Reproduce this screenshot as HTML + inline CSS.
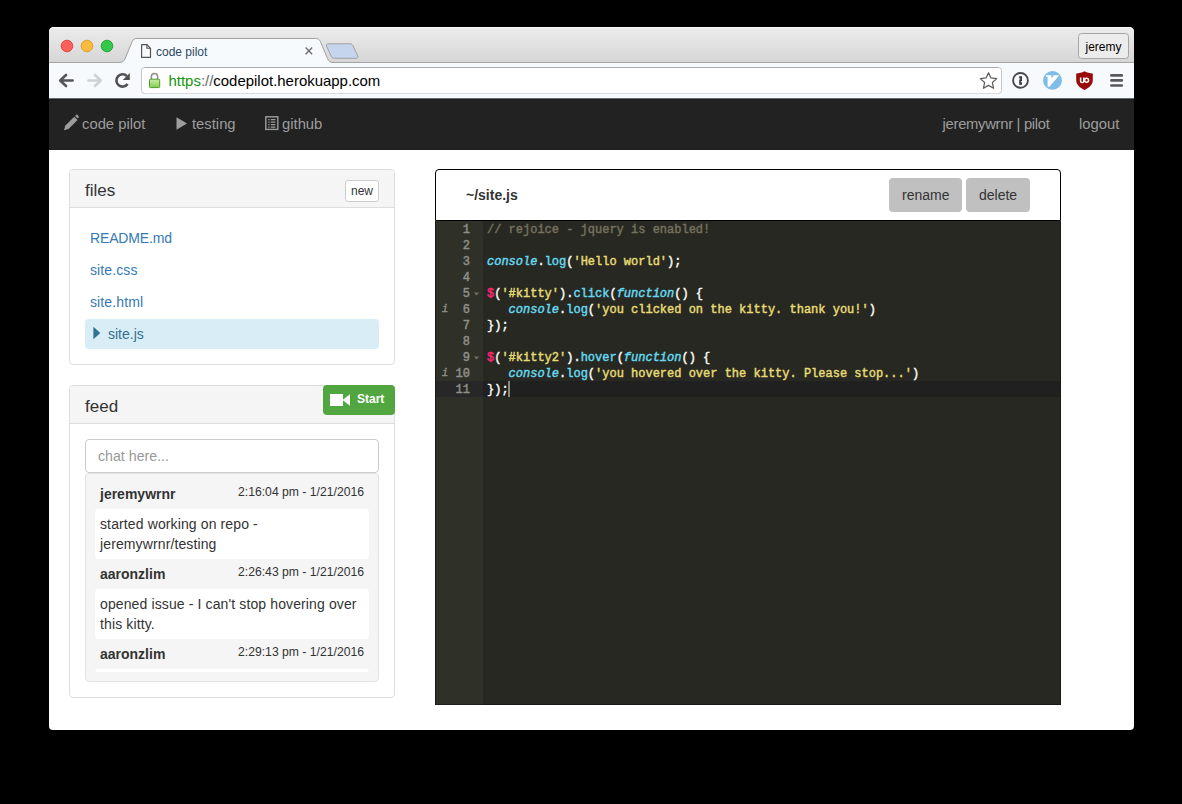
<!DOCTYPE html>
<html><head><meta charset="utf-8">
<style>
*{box-sizing:border-box;margin:0;padding:0}
html,body{width:1182px;height:804px;background:#000;overflow:hidden;font-family:"Liberation Sans",sans-serif;position:relative}
.a{position:absolute;white-space:pre;line-height:1}
#win{position:absolute;left:49px;top:27px;width:1085px;height:703px;background:#fff;border-radius:5px 5px 4px 4px;overflow:hidden}
#title{position:absolute;left:49px;top:27px;width:1085px;height:36px;background:linear-gradient(#ececec,#d6d6d6);border-bottom:1px solid #a3a3a3;border-radius:5px 5px 0 0;box-shadow:inset 0 1px #fafafa}
#toolbar{position:absolute;left:49px;top:63px;width:1085px;height:35px;background:#f6fafd}
#navbar{position:absolute;left:49px;top:98px;width:1085px;height:52px;background:#222;border-top:1px solid #6a6a6a;box-shadow:inset 0 1px #1c1c1c}
.nav{color:#9d9d9d;font-size:14.8px}
.panel{position:absolute;border:1px solid #ddd;border-radius:4px;background:#fff;overflow:hidden}
.ph{position:absolute;left:0;top:0;right:0;background:#f5f5f5;border-bottom:1px solid #ddd}
.link{color:#337ab7;font-size:14px}
.code{font-family:"Liberation Mono",monospace;font-size:12px;line-height:16px;white-space:pre;color:#f8f8f2;-webkit-text-stroke:0.45px currentColor}
.gn{color:#8f908a}
.c{color:#75715e}
.ci{color:#66d9ef;font-style:italic}
.c1{color:#66d9ef}
.s{color:#e6db74}
.k{color:#f92672}
.w{color:#f8f8f2}
.msg{position:absolute;left:95px;width:274px;background:#fff;border-radius:4px}
.user{font-size:14px;font-weight:bold;color:#333}
.ts{font-size:12px;color:#333}
.mt{font-size:14px;color:#333;line-height:20px;letter-spacing:0.12px}
</style></head><body>
<div id="win"></div>
<div id="title"></div>
<div id="toolbar"></div>
<div id="navbar"></div>

<svg class="a" style="left:0;top:0" width="1182" height="100" viewBox="0 0 1182 100">
  <!-- traffic lights -->
  <circle cx="67" cy="46" r="5.8" fill="#fc605c" stroke="#de4841" stroke-width="1"/>
  <circle cx="87" cy="46" r="5.8" fill="#fdbc40" stroke="#dc9f2a" stroke-width="1"/>
  <circle cx="107" cy="46" r="5.8" fill="#34c84a" stroke="#25a532" stroke-width="1"/>
  <!-- active tab -->
  <path d="M118.5,62.5 C121.7,62.5 123.8,61.5 125,58.9 L132.2,41.5 C133.1,39.3 134.6,38.5 137,38.5 L315.5,38.5 C318,38.5 319.4,39.3 320.4,41.5 L327.5,58.5 C328.8,61.5 330.5,62.5 333,62.5 L333,64 L118.5,64 Z" fill="#f6fafd"/>
  <path d="M118.5,62.5 C121.7,62.5 123.8,61.5 125,58.9 L132.2,41.5 C133.1,39.3 134.6,38.5 137,38.5 L315.5,38.5 C318,38.5 319.4,39.3 320.4,41.5 L327.5,58.5 C328.8,61.5 330.5,62.5 333,62.5" fill="none" stroke="#a0a0a0" stroke-width="1"/>
  <!-- new tab -->
  <path d="M328,43.8 L350,43.8 C351.5,43.8 352.3,44.4 352.8,45.4 L357.8,56 C358.3,57.4 357.7,58.3 356.3,58.3 L334.3,58.3 C332.8,58.3 332,57.7 331.5,56.7 L326.5,46.1 C326,44.7 326.6,43.8 328,43.8 Z" fill="#c6d5ee" stroke="#9a9a9a" stroke-width="0.9"/>
  <!-- page icon -->
  <path d="M141.6,44.6 L147,44.6 L150.5,48.3 L150.5,57.4 L141.6,57.4 Z" fill="none" stroke="#555" stroke-width="1.2" stroke-linejoin="round"/>
  <path d="M146.9,44.6 L146.9,48.3 L150.5,48.3" fill="none" stroke="#555" stroke-width="1.1"/>
  <!-- tab close -->
  <path d="M305.6,47.6 L312.2,54.2 M312.2,47.6 L305.6,54.2" stroke="#6e6e6e" stroke-width="1.4"/>
  <!-- back / fwd / reload -->
  <path d="M72.6,80.5 L60.5,80.5 M66,75 L60.2,80.5 L66,86" fill="none" stroke="#555" stroke-width="2.6" stroke-linecap="round" stroke-linejoin="round"/>
  <path d="M88.5,80.5 L100.4,80.5 M95,75 L100.7,80.5 L95,86" fill="none" stroke="#cfd2d5" stroke-width="2.6" stroke-linecap="round" stroke-linejoin="round"/>
  <path d="M127.6,84 A6.15,6.15 0 1 1 126.9,76.1" fill="none" stroke="#505050" stroke-width="2.6"/>
  <path d="M129.8,73 L129.8,80 L122.8,80 Z" fill="#505050"/>
  <!-- address bar -->
  <rect x="141.5" y="67.5" width="860" height="26" rx="3" ry="3" fill="#fff" stroke="#c3c7ca" stroke-width="1"/>
  <path d="M144.5,67.5 H998.5" stroke="#a8acb0" stroke-width="1"/>
  <path d="M144.5,93.5 H998.5" stroke="#d8dbde" stroke-width="1"/>
  <!-- lock -->
  <defs><linearGradient id="lg" x1="0" y1="0" x2="0" y2="1"><stop offset="0" stop-color="#c8f0a4"/><stop offset="1" stop-color="#86cc55"/></linearGradient></defs>
  <path d="M151.4,79.5 L151.4,76.6 A3.1,3.1 0 0 1 157.6,76.6 L157.6,79.5" fill="none" stroke="#8c8c8c" stroke-width="1.5"/>
  <rect x="149.5" y="79.2" width="10.2" height="8.4" rx="1" fill="url(#lg)" stroke="#4f9a2c" stroke-width="1"/>
  <!-- star -->
  <path d="M988.50,72.70 L990.91,77.98 L996.68,78.64 L992.40,82.57 L993.55,88.26 L988.50,85.40 L983.45,88.26 L984.60,82.57 L980.32,78.64 L986.09,77.98 Z" fill="#fff" stroke="#5e5e5e" stroke-width="1.25" stroke-linejoin="round"/>
  <!-- 1password -->
  <circle cx="1020.5" cy="80.4" r="7.4" fill="none" stroke="#4a4a4a" stroke-width="1.9"/>
  <rect x="1019.2" y="76.2" width="2.8" height="8.6" fill="#3a3a3a"/>
  <rect x="1019.2" y="78.4" width="1.1" height="1.1" fill="#f6fafd"/>
  <rect x="1020.9" y="81.2" width="1.1" height="1.1" fill="#f6fafd"/>
  <!-- vimium -->
  <circle cx="1052.5" cy="80.4" r="9.4" fill="#7fbde8"/>
  <path d="M1046,75.2 L1051.4,75.2 L1051.4,78.5 L1054,75.2 L1059.3,75.2 L1049.5,86.8 L1047.6,86.8 L1047.6,76.8 L1046,76.8 Z" fill="#fff"/>
  <!-- ublock -->
  <path d="M1084.5,71.2 C1087,72.6 1090,73.2 1092.8,73.4 L1092.8,80 C1092.8,84.5 1089.5,87.8 1084.5,89.9 C1079.5,87.8 1076.2,84.5 1076.2,80 L1076.2,73.4 C1079,73.2 1082,72.6 1084.5,71.2 Z" fill="#990b0b"/>
  <path d="M1080.6,77.5 L1080.6,81 A1.6,1.6 0 0 0 1083.8,81 L1083.8,77.5" fill="none" stroke="#fff" stroke-width="1.5"/>
  <circle cx="1086.6" cy="80.3" r="1.95" fill="none" stroke="#fff" stroke-width="1.5"/>
  <!-- hamburger -->
  <path d="M1111.4,75.4 h10.4 M1111.4,80.45 h10.4 M1111.4,85.5 h10.4" stroke="#585858" stroke-width="2.7" stroke-linecap="round"/>
  <!-- profile btn -->
  <rect x="1078.5" y="33.5" width="50" height="25" rx="3" fill="#ececec" stroke="#a5a5a5" stroke-width="1"/>
</svg>
<div class="a" style="left:156px;top:46px;font-size:12px;color:#2d4a66">code pilot</div>
<div class="a" style="left:168.5px;top:74px;font-size:14.95px;color:#000"><span style="color:#13960a">https</span><span style="color:#666">://</span>codepilot.herokuapp.com</div>
<div class="a" style="left:1085.5px;top:41px;font-size:12px;color:#000">jeremy</div>

<!-- navbar -->
<svg class="a" style="left:0;top:100px" width="400" height="50" viewBox="0 100 400 50">
  <path d="M64,130.2 L65.2,125.8 L74.3,116.8 L77.6,120.1 L68.5,129.1 Z" fill="#9d9d9d"/>
  <path d="M75,116 L76,115 A1,1 0 0 1 77.6,115 L78.6,116.2 A1,1 0 0 1 78.6,117.6 L78,118.4 Z" fill="#9d9d9d"/>
  <path d="M176.5,117.3 L187,123.5 L176.5,129.7 Z" fill="#9d9d9d"/>
  <rect x="265.8" y="116.8" width="12" height="12.6" fill="none" stroke="#9d9d9d" stroke-width="1.4"/>
  <path d="M268.3,119.6 h1.3 M268.3,122.1 h1.3 M268.3,124.6 h1.3 M268.3,127.1 h1.3 M270.8,119.6 h4.6 M270.8,122.1 h4.6 M270.8,124.6 h4.6 M270.8,127.1 h4.6" stroke="#9d9d9d" stroke-width="1.4"/>
</svg>
<div class="a nav" style="left:82px;top:117px">code pilot</div>
<div class="a nav" style="left:192px;top:117px">testing</div>
<div class="a nav" style="left:282px;top:117px">github</div>
<div class="a nav" style="left:942.6px;top:117px;letter-spacing:-0.3px">jeremywrnr | pilot</div>
<div class="a nav" style="left:1079px;top:117px">logout</div>

<!-- files panel -->
<div class="panel" style="left:69px;top:169px;width:326px;height:196px">
  <div class="ph" style="height:38px"></div>
</div>
<div class="a" style="left:85px;top:182px;font-size:17px;color:#333">files</div>
<div class="a" style="left:344.5px;top:180px;width:34.5px;height:22px;border:1px solid #ccc;border-radius:3px;background:#fff"></div>
<div class="a" style="left:351px;top:185px;font-size:12px;color:#333">new</div>
<div class="a link" style="left:90px;top:231px;letter-spacing:-0.15px">README.md</div>
<div class="a link" style="left:90px;top:263px;letter-spacing:0.1px">site.css</div>
<div class="a link" style="left:90px;top:295px;letter-spacing:0.12px">site.html</div>
<div class="a" style="left:85px;top:319px;width:294px;height:30px;background:#d9edf7;border-radius:4px"></div>
<svg class="a" style="left:93px;top:326px" width="8" height="14"><path d="M0.4,0.8 L7.3,7.05 L0.4,13.3 Z" fill="#31708f"/></svg>
<div class="a link" style="left:108px;top:327px;color:#31708f">site.js</div>

<!-- feed panel -->
<div class="panel" style="left:69px;top:385px;width:326px;height:313px">
  <div class="ph" style="height:38px"></div>
</div>
<div class="a" style="left:85px;top:398px;font-size:17px;color:#333">feed</div>
<div class="a" style="left:323px;top:385px;width:72px;height:30px;background:#52a640;border-radius:4px"></div>
<svg class="a" style="left:330px;top:393px" width="21" height="14"><rect x="0" y="1" width="13" height="12" fill="#fff"/><path d="M12.5,7 L20,1.2 L20,12.8 Z" fill="#fff"/></svg>
<div class="a" style="left:357px;top:393px;font-size:12px;font-weight:bold;color:#fff">Start</div>
<div class="a" style="left:85px;top:439px;width:294px;height:34px;border:1px solid #ccc;border-radius:4px;background:#fff"></div>
<div class="a" style="left:98px;top:449px;font-size:14.2px;color:#999">chat here...</div>
<div class="a" style="left:85px;top:473px;width:294px;height:209px;background:#f5f5f5;border:1px solid #e3e3e3;border-radius:4px;overflow:hidden">
  <div style="position:absolute;left:0;top:0;right:0;height:198px;overflow:hidden">
  <div class="msg" style="left:9px;top:35px;height:50px"></div>
  <div class="msg" style="left:9px;top:115px;height:50px"></div>
  <div class="msg" style="left:9px;top:195px;height:50px"></div>
  </div>
</div>
<div class="a user" style="left:100px;top:487px">jeremywrnr</div>
<div class="a ts" style="left:238px;top:486px;font-size:12.2px">2:16:04 pm - 1/21/2016</div>
<div class="a mt" style="left:100px;top:514px">started working on repo -
jeremywrnr/testing</div>
<div class="a user" style="left:100px;top:567px">aaronzlim</div>
<div class="a ts" style="left:238px;top:566px;font-size:12.2px">2:26:43 pm - 1/21/2016</div>
<div class="a mt" style="left:100px;top:594px">opened issue - I can't stop hovering over
this kitty.</div>
<div class="a user" style="left:100px;top:647px">aaronzlim</div>
<div class="a ts" style="left:238px;top:646px;font-size:12.2px">2:29:13 pm - 1/21/2016</div>

<!-- editor -->
<div class="a" style="left:435px;top:169px;width:626px;height:52px;border:1px solid #000;border-radius:4px 4px 0 0;background:#fff"></div>
<div class="a" style="left:435px;top:221px;width:626px;height:484px;background:#272822">
  <div style="position:absolute;left:1px;top:0;width:47px;bottom:0;background:#2f3129"></div>
  <div style="position:absolute;left:1px;top:160px;width:47px;height:16px;background:#272727"></div>
  <div style="position:absolute;left:48px;top:160px;right:1px;height:16px;background:#202020"></div>
  <div style="position:absolute;left:0;top:0;right:0;bottom:0;border:1px solid rgba(0,0,0,0.35);border-top:0"></div>
</div>
<div class="a" style="left:466px;top:188px;font-size:14px;font-weight:bold;color:#333">~/site.js</div>
<div class="a" style="left:889px;top:178px;width:73px;height:34px;background:#c0c0c0;border-radius:4px"></div>
<div class="a" style="left:966px;top:178px;width:64px;height:34px;background:#c0c0c0;border-radius:4px"></div>
<div class="a" style="left:902px;top:188px;font-size:14px;color:#333">rename</div>
<div class="a" style="left:979px;top:188px;font-size:14px;color:#333">delete</div>
<div class="a code" style="left:487px;top:222px"><span class="c">// rejoice - jquery is enabled!</span></div>
<div class="a code gn" style="left:440px;top:222px;width:30px;text-align:right">1</div>
<div class="a code" style="left:487px;top:238px"></div>
<div class="a code gn" style="left:440px;top:238px;width:30px;text-align:right">2</div>
<div class="a code" style="left:487px;top:254px"><span class="ci">console</span><span class="w">.</span><span class="c1">log</span><span class="w">(</span><span class="s">'Hello world'</span><span class="w">);</span></div>
<div class="a code gn" style="left:440px;top:254px;width:30px;text-align:right">3</div>
<div class="a code" style="left:487px;top:270px"></div>
<div class="a code gn" style="left:440px;top:270px;width:30px;text-align:right">4</div>
<div class="a code" style="left:487px;top:286px"><span class="k">$</span><span class="w">(</span><span class="s">'#kitty'</span><span class="w">).</span><span class="c1">click</span><span class="w">(</span><span class="ci">function</span><span class="w">() {</span></div>
<div class="a code gn" style="left:440px;top:286px;width:30px;text-align:right">5</div>
<div class="a code" style="left:487px;top:302px"><span class="w">   </span><span class="ci">console</span><span class="w">.</span><span class="c1">log</span><span class="w">(</span><span class="s">'you clicked on the kitty. thank you!'</span><span class="w">)</span></div>
<div class="a code gn" style="left:440px;top:302px;width:30px;text-align:right">6</div>
<div class="a code" style="left:487px;top:318px"><span class="w">});</span></div>
<div class="a code gn" style="left:440px;top:318px;width:30px;text-align:right">7</div>
<div class="a code" style="left:487px;top:334px"></div>
<div class="a code gn" style="left:440px;top:334px;width:30px;text-align:right">8</div>
<div class="a code" style="left:487px;top:350px"><span class="k">$</span><span class="w">(</span><span class="s">'#kitty2'</span><span class="w">).</span><span class="c1">hover</span><span class="w">(</span><span class="ci">function</span><span class="w">() {</span></div>
<div class="a code gn" style="left:440px;top:350px;width:30px;text-align:right">9</div>
<div class="a code" style="left:487px;top:366px"><span class="w">   </span><span class="ci">console</span><span class="w">.</span><span class="c1">log</span><span class="w">(</span><span class="s">'you hovered over the kitty. Please stop...'</span><span class="w">)</span></div>
<div class="a code gn" style="left:440px;top:366px;width:30px;text-align:right">10</div>
<div class="a code" style="left:487px;top:382px"><span class="w">});</span></div>
<div class="a code gn" style="left:440px;top:382px;width:30px;text-align:right">11</div>
<svg class="a" style="left:436px;top:221px" width="50" height="180">
  <path d="M38,71.5 L43,71.5 L40.5,74.5 Z" fill="#75715e"/>
  <path d="M38,135.5 L43,135.5 L40.5,138.5 Z" fill="#75715e"/>
</svg>
<div class="a code" style="left:442px;top:303px;color:#8f908a;font-style:italic;font-size:10px;line-height:14px">i</div>
<div class="a code" style="left:442px;top:367px;color:#8f908a;font-style:italic;font-size:10px;line-height:14px">i</div>
<div class="a" style="left:508px;top:381px;width:1.5px;height:16px;background:#8a8a80"></div>
</body></html>
